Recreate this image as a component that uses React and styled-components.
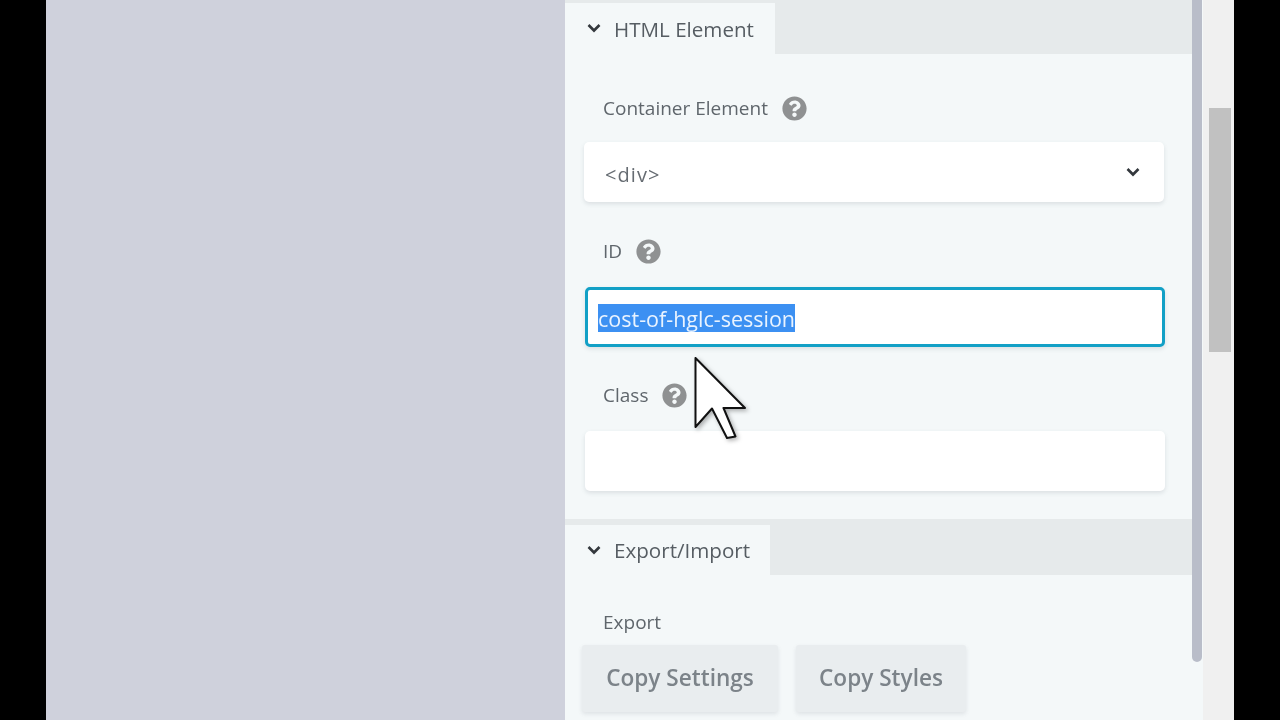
import styled, { createGlobalStyle } from "styled-components";
import { FaQuestionCircle } from "react-icons/fa";

const Global = createGlobalStyle`
  html, body {
    margin: 0;
    height: 100%;
    overflow: hidden;
    background: #000;
  }
  #root {
    height: 100%;
  }
`;

const Page = styled.div`
  position: relative;
  display: flex;
  width: 1280px;
  height: 720px;
  background: #000;
  font-family: "Open Sans", "Noto Sans", sans-serif;
  overflow: hidden;
  filter: blur(0.4px);
`;

const Canvas = styled.div`
  margin-left: 46px;
  width: 519px;
  background: #cfd1dc;
`;

const Panel = styled.div`
  display: flex;
  width: 638px;
  background: #f4f8f9;
`;

const Content = styled.div`
  width: 627px;
  flex: none;
`;

const Track = styled.div`
  width: 11px;
  flex: none;
`;

const TrackThumb = styled.div`
  width: 10px;
  height: 662px;
  background: #b9bdc9;
  border-radius: 0 0 5px 5px;
`;

const SectionBar = styled.div`
  display: flex;
  height: ${(p) => p.$height}px;
  margin-top: ${(p) => p.$top || 0}px;
  background: #e6eaeb;
`;

const SectionTab = styled.div`
  display: flex;
  align-items: center;
  gap: 13px;
  width: ${(p) => p.$width}px;
  margin-top: ${(p) => p.$inset}px;
  padding-left: 22px;
  box-sizing: border-box;
  background: #f4f8f9;
  font-size: 20.6px;
  color: #565d63;
`;

const Body = styled.div`
  padding: 0 38px 0 19px;
`;

const Field = styled.div`
  display: flex;
  flex-direction: column;
  gap: ${(p) => p.$gap}px;
  padding-top: ${(p) => p.$top}px;
`;

const LabelRow = styled.div`
  display: flex;
  align-items: center;
  gap: 14px;
  height: 26px;
  padding-left: 19px;
  font-size: 19px;
  color: #5f666c;
`;

const Control = styled.div`
  display: flex;
  align-items: center;
  justify-content: space-between;
  height: 60px;
  width: ${(p) => p.$width}px;
  margin-left: ${(p) => p.$left || 0}px;
  box-sizing: border-box;
  padding: 0 24px 0 21px;
  background: #fff;
  border-radius: 5px;
  box-shadow: 0 2px 4px rgba(90, 100, 110, 0.16);
  font-size: 20px;
  letter-spacing: 1.1px;
  color: #666c72;
`;

const SelectValue = styled.span`
  margin-top: 4px;
`;

const FocusedControl = styled(Control)`
  margin-left: 1px;
  padding: 0 0 0 10px;
  border: 3px solid #12a0c6;
  justify-content: flex-start;
`;

const Selected = styled.span`
  display: block;
  height: 28px;
  margin-top: 2px;
  line-height: 30px;
  background: #3c90f2;
  color: #e9f3ff;
  font-size: 21.5px;
  letter-spacing: 0;
`;

const Buttons = styled.div`
  display: flex;
  gap: 18px;
  margin-left: -2px;
`;

const CopyButton = styled.div`
  display: flex;
  align-items: center;
  justify-content: center;
  width: ${(p) => p.$width}px;
  height: 67px;
  padding-bottom: 2px;
  box-sizing: border-box;
  background: #e9edef;
  border-radius: 3px;
  box-shadow: 0 2px 4px rgba(90, 100, 110, 0.14);
  font-size: 22.6px;
  font-weight: 600;
  color: #7c8389;
`;

const PageScroll = styled.div`
  width: 31px;
  padding-left: 6px;
  box-sizing: border-box;
  background: #f0f0f0;
`;

const PageThumb = styled.div`
  width: 22px;
  height: 244px;
  margin-top: 108px;
  background: #c1c1c1;
`;

const Cursor = styled.svg`
  position: absolute;
  left: 690px;
  top: 352px;
  filter: drop-shadow(2px 2px 2px rgba(0, 0, 0, 0.3));
`;

const Help = () => <FaQuestionCircle size={25} color="#8f9192" />;

const Chevron = ({ size = 14, color = "#33383d" }) => (
  <svg width={size} height={size * 0.72} viewBox="0 0 14 10">
    <path d="M1.5 2 7 7.5 12.5 2" fill="none" stroke={color} strokeWidth="2.6" />
  </svg>
);

export default function App() {
  return (
    <Page>
      <Global />
      <Canvas />
      <Panel>
        <Content>
          <SectionBar $height={54}>
            <SectionTab $width={210} $inset={3}>
              <Chevron />
              HTML Element
            </SectionTab>
          </SectionBar>
          <Body>
            <Field $top={41} $gap={21}>
              <LabelRow>
                Container Element
                <Help />
              </LabelRow>
              <Control $width={580}>
                <SelectValue>&lt;div&gt;</SelectValue>
                <Chevron />
              </Control>
            </Field>
            <Field $top={36} $gap={23}>
              <LabelRow>
                ID
                <Help />
              </LabelRow>
              <FocusedControl $width={580}>
                <Selected>cost-of-hglc-session</Selected>
              </FocusedControl>
            </Field>
            <Field $top={35} $gap={23}>
              <LabelRow>
                Class
                <Help />
              </LabelRow>
              <Control $width={580} $left={1} />
            </Field>
          </Body>
          <SectionBar $height={56} $top={28}>
            <SectionTab $width={205} $inset={6}>
              <Chevron />
              Export/Import
            </SectionTab>
          </SectionBar>
          <Body>
            <Field $top={34} $gap={10}>
              <LabelRow>Export</LabelRow>
              <Buttons>
                <CopyButton $width={196}>Copy Settings</CopyButton>
                <CopyButton $width={170}>Copy Styles</CopyButton>
              </Buttons>
            </Field>
          </Body>
        </Content>
        <Track>
          <TrackThumb />
        </Track>
      </Panel>
      <PageScroll>
        <PageThumb />
      </PageScroll>
      <Cursor width="70" height="100" viewBox="690 352 70 100">
        <path
          d="M695.5 358 V427 L712 408.5 L727 438 L735.5 436.5 L723.5 408 H745 Z"
          fill="#fff"
          stroke="#111"
          strokeWidth="2"
          strokeLinejoin="round"
        />
      </Cursor>
    </Page>
  );
}
